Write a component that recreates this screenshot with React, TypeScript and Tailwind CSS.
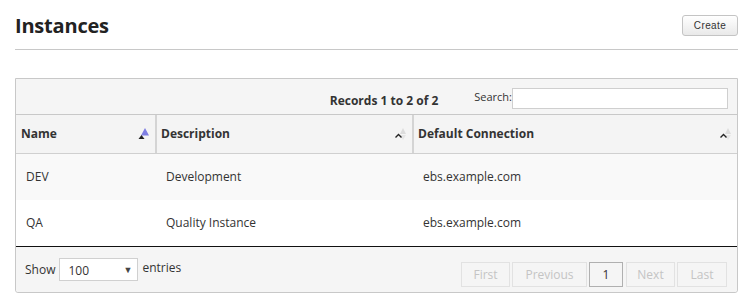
import React from "react";

function SortAsc() {
  return (
    <svg width="14" height="14" viewBox="0 0 14 14">
      <polygon points="8,1 12,8.5 4,8.5" fill="#7f7fe3" />
      <polygon points="4.5,8 7.5,12 1.5,12" fill="#222" />
    </svg>
  );
}

function SortBoth() {
  return (
    <svg width="14" height="16" viewBox="0 0 14 16">
      <polygon points="9,2 12,8 6,8" fill="#dcdcdc" />
      <polygon points="6,9 12,9 9,14" fill="#e6e6e6" />
      <polyline points="1.5,11.5 4.5,8.5 7.5,11.5" fill="none" stroke="#222" strokeWidth="1.4" />
    </svg>
  );
}

export default function App() {
  return (
    <div className="w-[748px] h-[307px] bg-white pl-[15px] pr-[10px] font-['Open_Sans',sans-serif] text-[12px] text-[#333]">
      <div className="flex items-start justify-between h-[49px]">
        <h1 className="mt-[12px] text-[20px] leading-[28px] font-bold text-[#222] tracking-[-0.2px]">Instances</h1>
        <button className="mt-[15px] w-[56px] h-[21px] rounded-[3px] border border-[#c4c4c4] bg-gradient-to-b from-white to-[#e9e9e9] font-['Liberation_Sans',sans-serif] text-[10px] tracking-[0.4px] text-[#333]">
          Create
        </button>
      </div>
      <div className="h-px bg-[#c8c8c8]" />

      <div className="mt-[28px] border border-[#c8c8c8] rounded-b-[3px]">
        {/* toolbar */}
        <div className="flex items-start justify-end h-[36px] bg-[#f5f5f5] border-b border-[#c8c8c8] pr-[9px]">
          <div className="mt-[13px] leading-[18px] font-bold text-[#333]">Records 1 to 2 of 2</div>
          <div className="ml-[36px] mt-[9px] leading-[18px] text-[11px] text-[#333]">Search:</div>
          <input className="mt-[9px] w-[216px] h-[21px] border border-[#cfcfcf] bg-white outline-none" />
        </div>

        {/* header */}
        <div className="flex h-[39px] bg-[#f4f4f4] border-b border-[#d0d0d0] font-bold text-[#333]">
          <div className="w-[141px] flex items-center justify-between pl-[5px] pr-[4px] border-r-2 border-[#d4d4d4]">
            <span>Name</span>
            <SortAsc />
          </div>
          <div className="w-[257px] flex items-center justify-between pl-[4px] pr-[4px] border-r-2 border-[#d4d4d4]">
            <span>Description</span>
            <SortBoth />
          </div>
          <div className="flex-1 flex items-center justify-between pl-[4px] pr-[4px]">
            <span>Default Connection</span>
            <SortBoth />
          </div>
        </div>

        {/* rows */}
        <div className="flex h-[46px] items-center bg-[#f9f9f9]">
          <div className="w-[141px] pl-[10px]">DEV</div>
          <div className="w-[257px] pl-[9px]">Development</div>
          <div className="flex-1 pl-[9px]">ebs.example.com</div>
        </div>
        <div className="flex h-[47px] items-center bg-white border-b border-[#111]">
          <div className="w-[141px] pl-[10px]">QA</div>
          <div className="w-[257px] pl-[9px]">Quality Instance</div>
          <div className="flex-1 pl-[9px]">ebs.example.com</div>
        </div>

        {/* footer */}
        <div className="flex items-start justify-between h-[45px] bg-[#f5f5f5] rounded-b-[3px] pl-[9px] pr-[10px]">
          <div className="flex items-center mt-[11px]">
            <span>Show</span>
            <div className="ml-[4px] w-[79px] h-[23px] bg-white border border-[#d0d0d0] flex items-center justify-between pl-[8px] pr-[5px]">
              <span className="mt-[2px]">100</span>
              <span className="text-[9px] text-[#444]">▼</span>
            </div>
            <span className="ml-[4px] -mt-[3px]">entries</span>
          </div>
          <div className="flex items-center mt-[15px]">
            <div className="w-[49px] h-[25px] flex items-center justify-center border border-[#e2e2e2] text-[#c4c4c4]">First</div>
            <div className="ml-[2px] w-[75px] h-[25px] flex items-center justify-center border border-[#e2e2e2] text-[#c4c4c4]">Previous</div>
            <div className="ml-[2px] w-[34px] h-[25px] flex items-center justify-center border border-[#b0b0b0] text-[#333]">1</div>
            <div className="ml-[3px] w-[49px] h-[25px] flex items-center justify-center border border-[#e2e2e2] text-[#c4c4c4]">Next</div>
            <div className="ml-[2px] w-[50px] h-[25px] flex items-center justify-center border border-[#e2e2e2] text-[#c4c4c4]">Last</div>
          </div>
        </div>
      </div>
    </div>
  );
}
